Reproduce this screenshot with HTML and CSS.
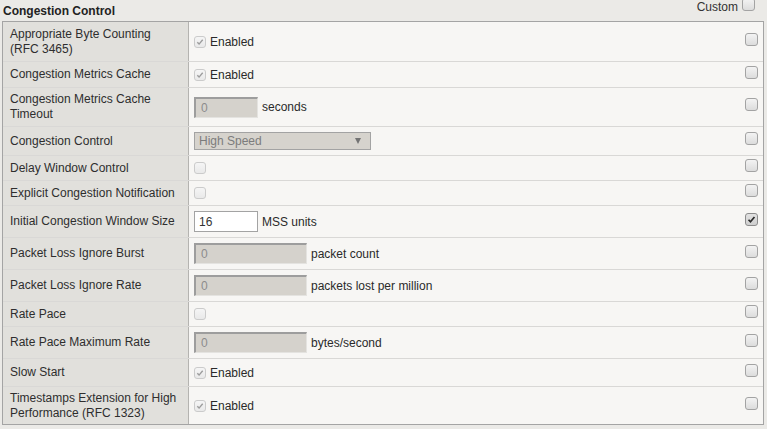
FILE: index.html
```html
<!DOCTYPE html>
<html>
<head>
<meta charset="utf-8">
<link rel="stylesheet" href="styles.css">
</head>
<body>
<div class="panel">
  <div class="head">
    <span class="title">Congestion Control</span>
    <span class="custom">Custom <span class="cb hcb"></span></span>
  </div>
  <div class="grid">
    <div class="row two">
      <div class="lbl">Appropriate Byte Counting<br>(RFC 3465)</div>
      <div class="val"><span class="cb dis"><svg viewBox="0 0 13 13"><path d="M3 6.8 L5.3 9.2 L10 3.6" /></svg></span><span>Enabled</span></div>
      <div class="cus"><span class="cb"></span></div>
    </div>
    <div class="row en">
      <div class="lbl">Congestion Metrics Cache</div>
      <div class="val"><span class="cb dis"><svg viewBox="0 0 13 13"><path d="M3 6.8 L5.3 9.2 L10 3.6" /></svg></span><span>Enabled</span></div>
      <div class="cus"><span class="cb"></span></div>
    </div>
    <div class="row two">
      <div class="lbl">Congestion Metrics Cache<br>Timeout</div>
      <div class="val"><input class="txt dis short" value="0" disabled><span>seconds</span></div>
      <div class="cus"><span class="cb"></span></div>
    </div>
    <div class="row sel">
      <div class="lbl">Congestion Control</div>
      <div class="val"><div class="select"><span>High Speed</span><span class="arrow"></span></div></div>
      <div class="cus"><span class="cb"></span></div>
    </div>
    <div class="row chk">
      <div class="lbl">Delay Window Control</div>
      <div class="val"><span class="cb dis"></span></div>
      <div class="cus"><span class="cb"></span></div>
    </div>
    <div class="row chk">
      <div class="lbl">Explicit Congestion Notification</div>
      <div class="val"><span class="cb dis"></span></div>
      <div class="cus"><span class="cb"></span></div>
    </div>
    <div class="row inp">
      <div class="lbl">Initial Congestion Window Size</div>
      <div class="val"><input class="txt short" value="16"><span>MSS units</span></div>
      <div class="cus"><span class="cb on"><svg viewBox="0 0 13 13"><path d="M3 6.8 L5.3 9.2 L10 3.6" /></svg></span></div>
    </div>
    <div class="row inp">
      <div class="lbl">Packet Loss Ignore Burst</div>
      <div class="val"><input class="txt dis" value="0" disabled><span>packet count</span></div>
      <div class="cus"><span class="cb"></span></div>
    </div>
    <div class="row inp">
      <div class="lbl">Packet Loss Ignore Rate</div>
      <div class="val"><input class="txt dis" value="0" disabled><span>packets lost per million</span></div>
      <div class="cus"><span class="cb"></span></div>
    </div>
    <div class="row chk">
      <div class="lbl">Rate Pace</div>
      <div class="val"><span class="cb dis"></span></div>
      <div class="cus"><span class="cb"></span></div>
    </div>
    <div class="row inp">
      <div class="lbl">Rate Pace Maximum Rate</div>
      <div class="val"><input class="txt dis" value="0" disabled><span>bytes/second</span></div>
      <div class="cus"><span class="cb"></span></div>
    </div>
    <div class="row en">
      <div class="lbl">Slow Start</div>
      <div class="val"><span class="cb dis"><svg viewBox="0 0 13 13"><path d="M3 6.8 L5.3 9.2 L10 3.6" /></svg></span><span>Enabled</span></div>
      <div class="cus"><span class="cb"></span></div>
    </div>
    <div class="row two last">
      <div class="lbl">Timestamps Extension for High<br>Performance (RFC 1323)</div>
      <div class="val"><span class="cb dis"><svg viewBox="0 0 13 13"><path d="M3 6.8 L5.3 9.2 L10 3.6" /></svg></span><span>Enabled</span></div>
      <div class="cus"><span class="cb"></span></div>
    </div>
  </div>
</div>
</body>
</html>
```

FILE: styles.css
```css
html, body {
  margin: 0;
  padding: 0;
  background: #ebeae7;
}
body {
  font-family: "Liberation Sans", Arial, sans-serif;
  font-size: 12px;
  line-height: 14px;
  color: #333;
}
.panel {
  width: 762px;
  margin-left: 2px;
}
.head {
  height: 21px;
  display: flex;
  justify-content: space-between;
  align-items: flex-start;
}
.title {
  font-weight: bold;
  color: #222;
  margin-top: 4px;
  padding-left: 1px;
}
.custom {
  display: flex;
  align-items: flex-start;
  gap: 4px;
  margin-right: 9px;
  margin-top: 0;
  color: #333;
}
.cb.hcb {
  margin-top: -2px;
}
.grid {
  border: 1px solid #a4a4a4;
  background: #f7f6f4;
}
.row {
  display: grid;
  grid-template-columns: 186px 1fr 20px;
  box-sizing: border-box;
  border-top: 1px solid #d9d8d6;
}
.row:first-child {
  border-top: none;
}
.row.two { height: 39px; }
.row.two.last { height: 38px; }
.row.en { height: 27px; }
.row.sel { height: 29px; }
.row.chk { height: 25px; }
.row.inp { height: 32px; }
.row.en:nth-child(2) { height: 26px; }
.row.en:nth-child(12) { height: 28px; }
.lbl {
  background: #e1e0dc;
  border-right: 1px solid #b4b3b0;
  padding-left: 7px;
  display: flex;
  align-items: center;
  white-space: nowrap;
  color: #2e2e2e;
  line-height: 15px;
}
.val {
  display: flex;
  align-items: center;
  gap: 4px;
  padding-left: 5px;
  color: #2a2a2a;
}
.cus {
  display: flex;
  align-items: center;
  justify-content: flex-end;
  padding-right: 5px;
}
.cus .cb {
  margin-bottom: 5px;
}
.cb {
  display: inline-block;
  width: 13px;
  height: 13px;
  box-sizing: border-box;
  border: 1px solid #a3a3a3;
  border-radius: 3px;
  background: linear-gradient(#f3f3f3, #dcdcdc);
  flex: none;
}
.cb svg {
  display: block;
  width: 11px;
  height: 11px;
}
.cb svg path {
  fill: none;
  stroke: #9c9c9c;
  stroke-width: 1.8;
}
.cb.dis {
  width: 12px;
  height: 12px;
  border-color: #cbcbcb;
  background: linear-gradient(#f5f5f5, #e9e9e9);
}
.cb.dis svg {
  width: 10px;
  height: 10px;
}
.cb.on {
  border-color: #8c8c8c;
  background: linear-gradient(#e2e2e2, #cfcfcf);
}
.cb.on svg path {
  stroke: #2a2a2a;
  stroke-width: 2;
}
.txt {
  box-sizing: border-box;
  width: 113px;
  height: 21px;
  margin: 0;
  border: 1px solid #a3a3a3;
  background: #fff;
  font-family: "Liberation Sans", Arial, sans-serif;
  font-size: 12px;
  color: #333;
  padding: 0 0 0 4px;
  outline: none;
}
.txt.short {
  width: 64px;
}
.txt.dis {
  background: #d5d2cc;
  border-style: solid;
  border-width: 2px 1px 1px 2px;
  border-color: #9d9d9d #e4e3e0 #e4e3e0 #9d9d9d;
  color: #8c8c8c;
  padding-left: 5px;
}
.select {
  box-sizing: border-box;
  width: 177px;
  height: 18px;
  border: 1px solid #a3a3a3;
  background: #d6d3cd;
  color: #7c7c7c;
  display: flex;
  align-items: center;
  justify-content: space-between;
  padding: 0 9px 0 4px;
}
.arrow {
  width: 0;
  height: 0;
  border-left: 3px solid transparent;
  border-right: 3px solid transparent;
  border-top: 6px solid #737373;
}
```
